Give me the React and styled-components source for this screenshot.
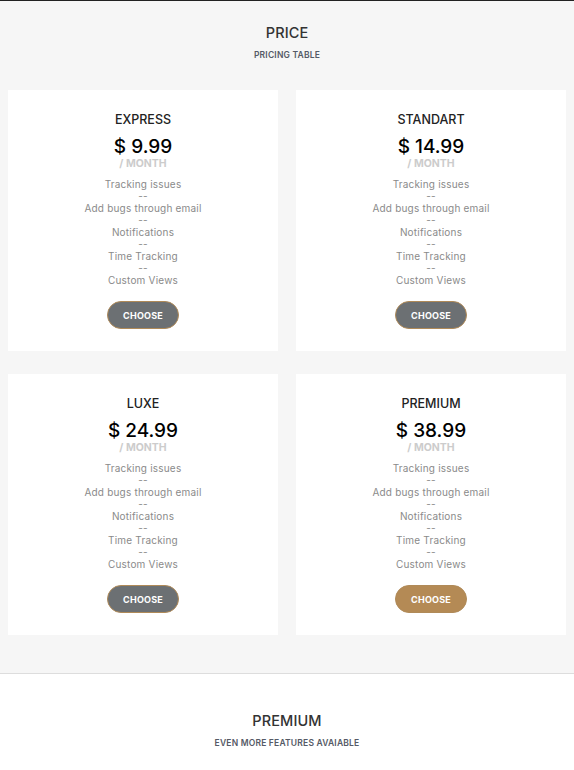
import React from "react";
import styled, { createGlobalStyle } from "styled-components";

const Global = createGlobalStyle`
  html, body { margin: 0; padding: 0; background: #ffffff; }
  body { font-family: Inter, "DejaVu Sans", sans-serif; }
  * { box-sizing: border-box; }
`;

const Page = styled.div`
  border-top: 1px solid #222;
  border-bottom: 1px solid #222;
`;

const PriceSection = styled.section`
  background: #f6f6f6;
  padding: 22px 8px 38px;
  border-bottom: 1px solid #dddddd;
`;

const Heading = styled.h2`
  margin: 0;
  text-align: center;
  font-size: 14.5px;
  line-height: 20px;
  font-weight: 500;
  color: #333;
  letter-spacing: 0.1px;
`;

const SubHeading = styled.p`
  margin: 6px 0 0;
  text-align: center;
  font-size: 8.5px;
  line-height: 12px;
  font-weight: 600;
  color: #555a66;
  letter-spacing: 0.2px;
`;

const Grid = styled.div`
  display: grid;
  grid-template-columns: 270px 270px;
  column-gap: 18px;
  row-gap: 23px;
  margin-top: 29px;
`;

const Card = styled.div`
  background: #fff;
  padding: 22px 0 22px;
  display: flex;
  flex-direction: column;
  align-items: center;
  text-align: center;
`;

const PlanName = styled.h3`
  margin: 0;
  font-size: 12.5px;
  line-height: 16px;
  font-weight: 500;
  color: #222;
`;

const Price = styled.div`
  margin-top: 7px;
  font-size: 19px;
  line-height: 24px;
  font-weight: 500;
  color: #000;
`;

const Period = styled.div`
  margin-top: -1px;
  font-size: 10.5px;
  line-height: 12px;
  font-weight: 700;
  color: #cccccc;
`;

const Features = styled.ul`
  list-style: none;
  margin: 8px 0 0;
  padding: 0;
  font-size: 10px;
  line-height: 12px;
  color: #8a8a8a;
  letter-spacing: 0.2px;
`;

const Feature = styled.li``;

const Button = styled.button`
  margin-top: 15px;
  width: 72px;
  height: 28px;
  border-radius: 14px;
  border: 1px solid #b08a58;
  background: ${(p) => (p.$accent ? "#b48a55" : "#6c7073")};
  color: #fff;
  font-family: inherit;
  font-size: 9px;
  font-weight: 700;
  letter-spacing: 0.2px;
  padding: 0;
  cursor: pointer;
`;

const PremiumSection = styled.section`
  background: #fff;
  padding: 37px 0 21px;
`;

const plans = [
  { name: "EXPRESS", price: "$ 9.99" },
  { name: "STANDART", price: "$ 14.99" },
  { name: "LUXE", price: "$ 24.99" },
  { name: "PREMIUM", price: "$ 38.99", accent: true },
];

const featureList = [
  "Tracking issues",
  "--",
  "Add bugs through email",
  "--",
  "Notifications",
  "--",
  "Time Tracking",
  "--",
  "Custom Views",
];

export default function App() {
  return (
    <>
      <Global />
      <Page>
        <PriceSection>
          <Heading>PRICE</Heading>
          <SubHeading>PRICING TABLE</SubHeading>
          <Grid>
            {plans.map((p) => (
              <Card key={p.name}>
                <PlanName>{p.name}</PlanName>
                <Price>{p.price}</Price>
                <Period>/ MONTH</Period>
                <Features>
                  {featureList.map((f, i) => (
                    <Feature key={i}>{f}</Feature>
                  ))}
                </Features>
                <Button $accent={p.accent}>CHOOSE</Button>
              </Card>
            ))}
          </Grid>
        </PriceSection>
        <PremiumSection>
          <Heading>PREMIUM</Heading>
          <SubHeading>EVEN MORE FEATURES AVAIABLE</SubHeading>
        </PremiumSection>
      </Page>
    </>
  );
}
